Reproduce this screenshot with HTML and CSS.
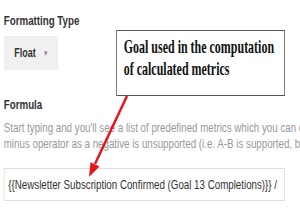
FILE: index.html
```html
<!DOCTYPE html>
<html lang="en">

<head>
    <meta charset="UTF-8">
    <title>Formula</title>
    <link rel="stylesheet" href="styles.css">
</head>

<body>
    <div class="page">
        <div class="label">Formatting Type</div>
        <div class="select">
            <span class="select-value">Float</span>
            <span class="caret">&#9662;</span>
        </div>

        <div class="label formula">Formula</div>
        <p class="help">
            <span>Start typing and you'll see a list of predefined metrics which you can choose from. Using the</span>
            <span>minus operator as a negative is unsupported (i.e. A-B is supported, but -A is not).</span>
        </p>
        <div class="formula-input">{{Newsletter Subscription Confirmed (Goal 13 Completions)}} /</div>

        <!-- annotation -->
        <div class="callout">
            <span class="callout-text">Goal used in the computation<br>of calculated metrics</span>
        </div>
    </div>

    <svg class="arrow" width="300" height="209" viewBox="0 0 300 209">
        <line x1="127" y1="96" x2="95" y2="164" stroke="#e3161b" stroke-width="2.5"/>
        <polygon points="89,177 99.5,166.5 90.5,162.3" fill="#e3161b"/>
    </svg>
</body>

</html>
```

FILE: styles.css
```css
html, body {
    margin: 0;
    overflow: hidden;
    background: #fff;
}

body {
    position: relative;
    width: 300px;
    height: 209px;
    font-family: "Liberation Sans", Arial, sans-serif;
}

/* screenshot is squeezed sideways */
.page {
    position: relative;
    width: 400px;
    height: 209px;
    padding: 13px 0 0 5px;
    box-sizing: border-box;
    overflow: hidden;
    transform: scaleX(0.75);
    transform-origin: 0 0;
}

.label {
    font-size: 13px;
    font-weight: bold;
    line-height: 16px;
    color: #333;
}

.label.formula {
    margin-top: 27px;
}

.select {
    display: flex;
    align-items: center;
    width: 71px;
    height: 34px;
    margin-top: 7px;
    margin-left: 1px;
    box-sizing: border-box;
    padding-left: 12px;
    gap: 11px;
    background: #f1f1f1;
    border: 1px solid #ececec;
}

.select-value {
    font-size: 12px;
    font-weight: bold;
    color: #333;
}

.caret {
    font-size: 9px;
    color: #888;
}

.help {
    margin: 7px 0 0;
    font-size: 13px;
    line-height: 16px;
    color: #999;
    white-space: nowrap;
}

.help span {
    display: block;
}

.formula-input {
    width: 375px;
    height: 33px;
    margin-top: 16px;
    box-sizing: border-box;
    padding: 0 5px;
    border: 1px solid #dedede;
    font-size: 13px;
    line-height: 31px;
    color: #333;
    white-space: nowrap;
    overflow: hidden;
}

.callout {
    position: absolute;
    left: 155px;
    top: 30px;
    width: 225px;
    height: 66px;
    box-sizing: border-box;
    padding: 5px 0 0 9px;
    border: 1px solid #555;
    background: #fff;
    font-family: "Liberation Serif", "Times New Roman", serif;
    font-weight: bold;
    font-size: 19px;
    line-height: 22px;
    color: #111;
    white-space: nowrap;
}

.callout-text {
    display: inline-block;
    transform: scaleX(0.84);
    transform-origin: 0 0;
}

.arrow {
    position: absolute;
    left: 0;
    top: 0;
}
```
